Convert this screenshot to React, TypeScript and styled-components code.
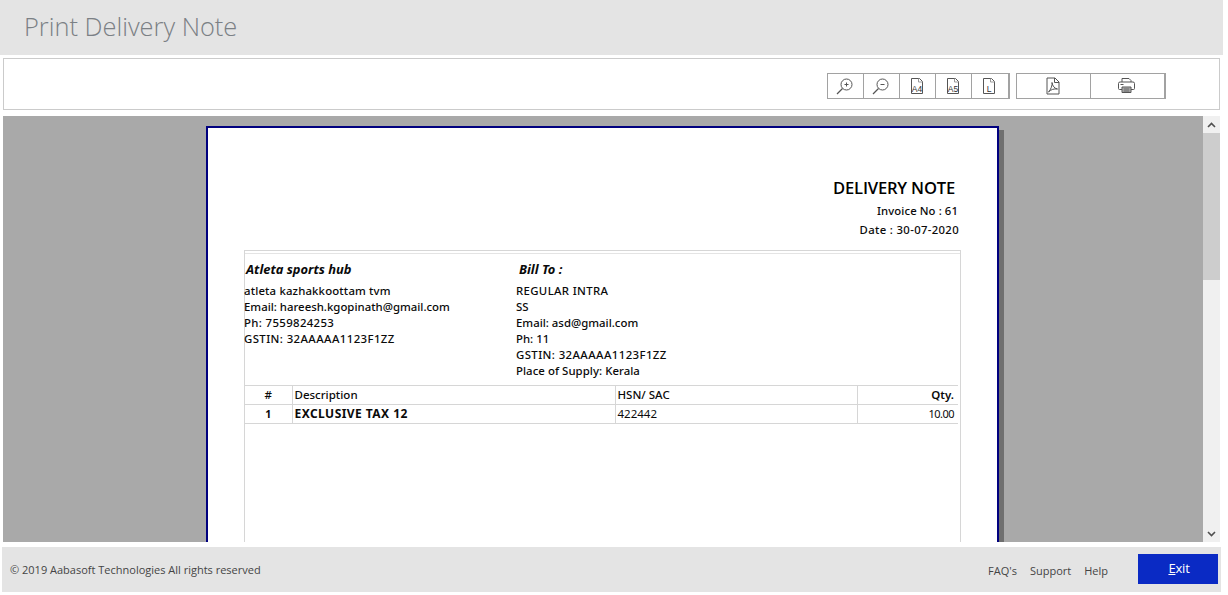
import React from 'react';
import styled, { createGlobalStyle } from 'styled-components';

const GlobalStyle = createGlobalStyle`
  html, body {
    margin: 0;
    padding: 0;
    background: #fff;
    overflow: hidden;
  }
  body {
    font-family: "Noto Sans", "Open Sans", sans-serif;
  }
`;

const Screen = styled.div`
  width: 1228px;
  height: 595px;
  display: flex;
  flex-direction: column;
  overflow: hidden;
`;

const Header = styled.header`
  width: 1223px;
  height: 55px;
  flex: none;
  display: flex;
  align-items: center;
  padding: 0 0 3px 24px;
  box-sizing: border-box;
  background: #e4e4e4;
`;

const Title = styled.h1`
  margin: 0;
  font-family: "Open Sans", sans-serif;
  font-weight: 300;
  font-size: 25.4px;
  color: #7b8085;
`;

const Toolbar = styled.div`
  flex: none;
  width: 1217px;
  height: 52px;
  margin: 3px 0 6px 3px;
  box-sizing: border-box;
  border: 1px solid #cbcbcb;
  display: flex;
  align-items: center;
  justify-content: flex-end;
  gap: 6px;
  padding: 3px 53px 0 0;
`;

const ToolGroup = styled.div`
  display: flex;
  height: 26px;
  box-sizing: border-box;
  border: 1px solid #a2a2a2;
  border-right-width: 2px;
`;

const ToolButton = styled.button<{ $w: number }>`
  width: ${(p) => p.$w}px;
  padding: 0 2px 0 0;
  border: 0;
  border-right: 1px solid #a2a2a2;
  background: #fff;
  display: flex;
  align-items: center;
  justify-content: center;
  &:last-child {
    border-right: 0;
  }
`;

const ViewerRow = styled.div`
  flex: none;
  width: 1217px;
  height: 426px;
  margin-left: 3px;
  display: flex;
  overflow: hidden;
`;

const Viewer = styled.div`
  flex: 1;
  background: #a9a9a9;
  padding: 10px 0 0 203px;
  overflow: hidden;
`;

const Page = styled.div`
  width: 793px;
  height: 700px;
  box-sizing: border-box;
  background: #fff;
  border: 2px solid #00007f;
  box-shadow: 5px 4px 0 #6f6f6f;
  padding: 49px 36px 0 36px;
  color: #0a0a0a;
`;

const DocTitle = styled.div`
  text-align: right;
  font-family: "Open Sans", sans-serif;
  font-size: 16.6px;
  line-height: 22px;
  font-weight: 600;
  letter-spacing: -0.2px;
  margin: 0 6px 2px 0;
  color: #000;
`;

const DocMeta = styled.div<{ $right: number; $spacing: number }>`
  text-align: right;
  font-size: 11.3px;
  font-weight: 500;
  line-height: 19px;
  letter-spacing: ${(p) => p.$spacing}px;
  margin-right: ${(p) => p.$right}px;
`;

const DocBox = styled.div`
  margin-top: 11px;
  height: 400px;
  border: 1px solid #d6d6d6;
  border-bottom: 0;
  padding-top: 2px;
`;

const BoxInner = styled.div`
  border-top: 1px solid #e4e4e4;
`;

const Parties = styled.div`
  display: flex;
  height: 131px;
`;

const Party = styled.div<{ $w: number; $left: number }>`
  width: ${(p) => p.$w}px;
  margin-left: ${(p) => p.$left}px;
  flex: none;
`;

const PartyName = styled.div<{ $indent: number }>`
  font-family: "Noto Sans", sans-serif;
  font-style: italic;
  font-weight: 700;
  font-size: 12.9px;
  line-height: 16px;
  margin: 7px 0 6px ${(p) => p.$indent}px;
`;

const PartyLine = styled.div<{ $spacing: number }>`
  font-size: 11.4px;
  font-weight: 500;
  line-height: 16px;
  white-space: nowrap;
  letter-spacing: ${(p) => p.$spacing}px;
`;

const Table = styled.table`
  width: 713px;
  border-collapse: collapse;
  table-layout: fixed;
  font-size: 11.5px;
  line-height: 18px;

  td, th {
    border-top: 1px solid #d6d6d6;
    border-bottom: 1px solid #d6d6d6;
    border-left: 1px solid #d6d6d6;
    padding: 0 2px;
    height: 18px;
    white-space: nowrap;
    overflow: hidden;
  }
  td:first-child, th:first-child {
    border-left: 0;
  }
  th {
    font-weight: 500;
    text-align: left;
  }
`;

const Cell = styled.td<{ $align?: string; $bold?: boolean; $size?: number; $spacing?: number }>`
  text-align: ${(p) => p.$align || 'left'};
  font-weight: ${(p) => (p.$bold ? 700 : 400)};
  font-size: ${(p) => p.$size || 11.5}px;
  letter-spacing: ${(p) => p.$spacing || 0}px;
  && {
    padding-right: ${(p) => (p.$align === 'right' ? 4 : 2)}px;
  }
`;

const HeadCell = styled.th<{ $align?: string; $strong?: boolean }>`
  && {
    text-align: ${(p) => p.$align || 'left'};
    font-weight: ${(p) => (p.$strong ? 600 : 500)};
    padding-right: ${(p) => (p.$align === 'right' ? 4 : 2)}px;
  }
`;

const ScrollTrack = styled.div`
  flex: none;
  width: 17px;
  background: #f0f0f0;
  display: flex;
  flex-direction: column;
  align-items: center;
  position: relative;
`;

const ScrollArrow = styled.div`
  height: 17px;
  width: 17px;
  flex: none;
  display: flex;
  align-items: center;
  justify-content: center;
`;

const ScrollThumb = styled.div`
  width: 17px;
  height: 147px;
  flex: none;
  background: #cdcdcd;
`;

const ScrollSpacer = styled.div`
  flex: 1;
`;

const Footer = styled.footer`
  flex: none;
  width: 1219px;
  height: 45px;
  margin: 5px 0 0 2px;
  background: #e4e4e4;
  box-sizing: border-box;
  display: flex;
  align-items: center;
  padding: 0 3px 0 8px;
  font-family: "Open Sans", sans-serif;
  font-size: 11px;
  color: #444;
`;

const Copyright = styled.div`
  flex: 1;
`;

const FooterLinks = styled.div`
  display: flex;
  gap: 13px;
  margin-right: 30px;
  padding-top: 2px;
`;

const ExitButton = styled.button`
  width: 80px;
  height: 30px;
  margin-bottom: 2px;
  border: 0;
  padding: 0 0 2px 2px;
  background: #0a2ac4;
  color: #fff;
  font-family: "Open Sans", sans-serif;
  font-size: 13px;
  letter-spacing: -0.2px;
  u {
    text-decoration-thickness: 1px;
  }
`;

const stroke = { fill: 'none', stroke: '#555', strokeWidth: 1 };

const MagnifierIcon: React.FC<{ plus?: boolean }> = ({ plus }) => (
  <svg width="18" height="18" viewBox="0 0 18 18" {...stroke}>
    <circle cx="10.5" cy="7.5" r="5.5" />
    <path d="M6.5 11.5 L1 17" strokeWidth="1.3" />
    <path d="M8.5 7.5h4" />
    {plus && <path d="M10.5 5.5v4" />}
  </svg>
);

const PageIcon: React.FC<{ label: string }> = ({ label }) => (
  <svg width="14" height="18" viewBox="0 0 14 18" {...stroke}>
    <path d="M1.5 1.5h8l3 3v12h-11z" />
    <path d="M8.5 1.5v3.5h4" stroke="#999" />
    <text
      x="7"
      y="14.5"
      textAnchor="middle"
      fontFamily="Liberation Sans, sans-serif"
      fontSize="8.5"
      fill="#333"
      stroke="none"
    >
      {label}
    </text>
  </svg>
);

const PdfIcon = () => (
  <svg width="14" height="18" viewBox="0 0 14 18" {...stroke}>
    <path d="M1 1h8l4 4v12H1z" />
    <path d="M8.5 1v4.5H13" />
    <path d="M2.5 15 C5 12.5 6.5 8 6 5.5 C6.5 9 8.5 11.5 11.5 12 C8 11.5 5 12.5 2.5 15z" />
  </svg>
);

const PrintIcon = () => (
  <svg width="17" height="17" viewBox="0 0 17 17" {...stroke}>
    <path d="M4 5V1.5h7l2 2V5" />
    <path d="M4 12.5H1.5a1 1 0 0 1-1-1V6.5a1.5 1.5 0 0 1 1.5-1.5h13a1.5 1.5 0 0 1 1.5 1.5v5a1 1 0 0 1-1 1H13" />
    <path d="M4 10h9v5.5H4z" fill="#bbb" />
    <path d="M2.5 7.5h3" />
    <path d="M5.5 12h6M5.5 14h6" />
  </svg>
);

const Chevron: React.FC<{ down?: boolean }> = ({ down }) => (
  <svg width="9" height="6" viewBox="0 0 9 6" fill="none" stroke="#505050" strokeWidth="1.6">
    <path d={down ? 'M1 1l3.5 3.5L8 1' : 'M1 5l3.5-3.5L8 5'} />
  </svg>
);

const companyLines = [
  { text: 'atleta kazhakkoottam tvm', spacing: 0.15 },
  { text: 'Email: hareesh.kgopinath@gmail.com', spacing: 0 },
  { text: 'Ph: 7559824253', spacing: 0.35 },
  { text: 'GSTIN: 32AAAAA1123F1ZZ', spacing: 0.4 },
];

const billLines = [
  { text: 'REGULAR INTRA', spacing: 0.35 },
  { text: 'SS', spacing: 0 },
  { text: 'Email: asd@gmail.com', spacing: 0 },
  { text: 'Ph: 11', spacing: 0 },
  { text: 'GSTIN: 32AAAAA1123F1ZZ', spacing: 0.4 },
  { text: 'Place of Supply: Kerala', spacing: 0.05 },
];

const App: React.FC = () => (
  <Screen>
    <GlobalStyle />
    <Header>
      <Title>Print Delivery Note</Title>
    </Header>
    <Toolbar>
      <ToolGroup>
        <ToolButton $w={36}><MagnifierIcon plus /></ToolButton>
        <ToolButton $w={36}><MagnifierIcon /></ToolButton>
        <ToolButton $w={36}><PageIcon label="A4" /></ToolButton>
        <ToolButton $w={36}><PageIcon label="A5" /></ToolButton>
        <ToolButton $w={36}><PageIcon label="L" /></ToolButton>
      </ToolGroup>
      <ToolGroup>
        <ToolButton $w={74}><PdfIcon /></ToolButton>
        <ToolButton $w={73}><PrintIcon /></ToolButton>
      </ToolGroup>
    </Toolbar>
    <ViewerRow>
      <Viewer>
        <Page>
          <DocTitle>DELIVERY NOTE</DocTitle>
          <DocMeta $right={3} $spacing={0.1}>Invoice No : 61</DocMeta>
          <DocMeta $right={2} $spacing={0.35}>Date : 30-07-2020</DocMeta>
          <DocBox>
            <BoxInner>
              <Parties>
                <Party $w={271} $left={-1}>
                  <PartyName $indent={2}>Atleta sports hub</PartyName>
                  {companyLines.map((line) => (
                    <PartyLine key={line.text} $spacing={line.spacing}>{line.text}</PartyLine>
                  ))}
                </Party>
                <Party $w={300} $left={1}>
                  <PartyName $indent={3}>Bill To :</PartyName>
                  {billLines.map((line) => (
                    <PartyLine key={line.text} $spacing={line.spacing}>{line.text}</PartyLine>
                  ))}
                </Party>
              </Parties>
              <Table>
                <colgroup>
                  <col style={{ width: 47 }} />
                  <col style={{ width: 323 }} />
                  <col style={{ width: 242 }} />
                  <col style={{ width: 101 }} />
                </colgroup>
                <thead>
                  <tr>
                    <HeadCell $align="center">#</HeadCell>
                    <HeadCell>Description</HeadCell>
                    <HeadCell>HSN/ SAC</HeadCell>
                    <HeadCell $align="right" $strong>Qty.</HeadCell>
                  </tr>
                </thead>
                <tbody>
                  <tr>
                    <Cell $align="center" $bold $size={10.5}>1</Cell>
                    <Cell $bold $size={12} $spacing={0.45}>EXCLUSIVE TAX 12</Cell>
                    <Cell>422442</Cell>
                    <Cell $align="right" $size={11} $spacing={-0.5}>10.00</Cell>
                  </tr>
                </tbody>
              </Table>
            </BoxInner>
          </DocBox>
        </Page>
      </Viewer>
      <ScrollTrack>
        <ScrollArrow><Chevron /></ScrollArrow>
        <ScrollThumb />
        <ScrollSpacer />
        <ScrollArrow><Chevron down /></ScrollArrow>
      </ScrollTrack>
    </ViewerRow>
    <Footer>
      <Copyright>© 2019 Aabasoft Technologies All rights reserved</Copyright>
      <FooterLinks>
        <span>FAQ's</span>
        <span>Support</span>
        <span>Help</span>
      </FooterLinks>
      <ExitButton><u>E</u>xit</ExitButton>
    </Footer>
  </Screen>
);

export default App;
